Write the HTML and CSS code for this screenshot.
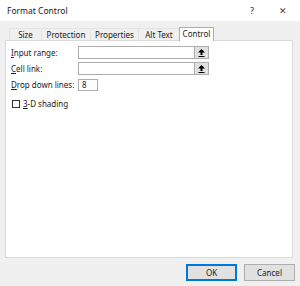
FILE: index.html
```html
<!DOCTYPE html>
<html lang="en">

<head>
    <meta charset="UTF-8">
    <title>Format Control</title>
    <link rel="stylesheet" href="styles.css">
</head>

<body>
    <div class="dialog">
        <div class="titlebar">
            <span class="title">Format Control</span>
            <span class="help">?</span>
            <span class="close">&#x2715;</span>
        </div>
        <div class="content">
            <div class="tabs">
                <div class="tab t-size">Size</div>
                <div class="tab t-prot">Protection</div>
                <div class="tab t-prop">Properties</div>
                <div class="tab t-alt">Alt Text</div>
                <div class="tab t-ctrl active">Control</div>
            </div>
            <div class="panel">
                <div class="form">
                    <label><u>I</u>nput range:</label>
                    <div class="field">
                        <span class="box"></span>
                        <span class="pick">
                            <svg width="7" height="8" viewBox="0 0 7 8">
                                <path d="M3.5 0 L7 3.5 H4.5 V6 H2.5 V3.5 H0 Z" fill="#000"/>
                                <rect x="0.5" y="7" width="6" height="1" fill="#000"/>
                            </svg>
                        </span>
                    </div>
                    <label><u>C</u>ell link:</label>
                    <div class="field">
                        <span class="box"></span>
                        <span class="pick">
                            <svg width="7" height="8" viewBox="0 0 7 8">
                                <path d="M3.5 0 L7 3.5 H4.5 V6 H2.5 V3.5 H0 Z" fill="#000"/>
                                <rect x="0.5" y="7" width="6" height="1" fill="#000"/>
                            </svg>
                        </span>
                    </div>
                    <label><u>D</u>rop down lines:</label>
                    <div class="lines">8</div>
                </div>
                <div class="check">
                    <span class="checkbox"></span>
                    <span><u>3</u>-D shading</span>
                </div>
            </div>
            <div class="buttons">
                <div class="btn ok">OK</div>
                <div class="btn">Cancel</div>
            </div>
        </div>
    </div>
</body>

</html>
```

FILE: styles.css
```css
body {
    margin: 0;
    padding: 0;
    font-family: 'Noto Sans', 'Open Sans', sans-serif;
    font-size: 8px;
    color: #1a1a1a;
}

.dialog {
    width: 300px;
    height: 286px;
    background-color: #f0f0f0;
    display: flex;
    flex-direction: column;
}

.titlebar {
    height: 21px;
    background-color: #fff;
    display: flex;
    align-items: center;
    padding-left: 7px;
    font-size: 8.5px;
}

.title {
    flex: 1;
}

.help {
    width: 10px;
    margin-right: 21px;
    text-align: center;
}

.close {
    width: 10px;
    margin-right: 12px;
    text-align: center;
    font-size: 9px;
    color: #444;
}

.content {
    flex: 1;
    padding: 6px 5px 0 5px;
    display: flex;
    flex-direction: column;
}

/* tab strip */
.tabs {
    display: flex;
    height: 13px;
    padding-left: 4px;
}

.tab {
    height: 12px;
    margin-top: 1px;
    line-height: 12px;
    text-align: center;
    border: 1px solid #e3e3e3;
    border-bottom: none;
    margin-right: -1px;
    box-sizing: border-box;
}

.t-size { width: 33px; }
.t-prot { width: 50px; }
.t-prop { width: 49px; }
.t-alt { width: 42px; }

.tab.active {
    width: 35px;
    height: 14px;
    margin-top: 0;
    background-color: #fff;
    border-color: #adadad;
    position: relative;
    z-index: 1;
}

.panel {
    width: 288px;
    height: 218px;
    background-color: #fff;
    border: 1px solid #d9d9d9;
    box-sizing: border-box;
    padding: 5px 0 0 5px;
}

.form {
    display: grid;
    grid-template-columns: 67px 131px;
    grid-auto-rows: 13px;
    row-gap: 3px;
    align-items: center;
}

.field {
    display: flex;
    height: 13px;
    border: 1px solid #adadad;
    box-sizing: border-box;
}

.box {
    flex: 1;
}

.pick {
    width: 13px;
    background-color: #e1e1e1;
    border-left: 1px solid #adadad;
    display: flex;
    align-items: center;
    justify-content: center;
}

.lines {
    width: 20px;
    height: 12px;
    border: 1px solid #adadad;
    box-sizing: border-box;
    line-height: 10px;
    padding-left: 3px;
}

.check {
    display: flex;
    align-items: center;
    gap: 3px;
    margin-top: 7px;
    padding-left: 1px;
}

.checkbox {
    width: 8px;
    height: 8px;
    border: 1px solid #333;
    box-sizing: border-box;
}

.buttons {
    display: flex;
    justify-content: flex-end;
    gap: 7px;
    margin-top: 6px;
    padding-right: 0;
}

.btn {
    width: 51px;
    height: 17px;
    line-height: 15px;
    text-align: center;
    background-color: #e1e1e1;
    border: 1px solid #adadad;
    box-sizing: border-box;
}

.btn.ok {
    border: 2px solid #0078d7;
    line-height: 13px;
}
```
